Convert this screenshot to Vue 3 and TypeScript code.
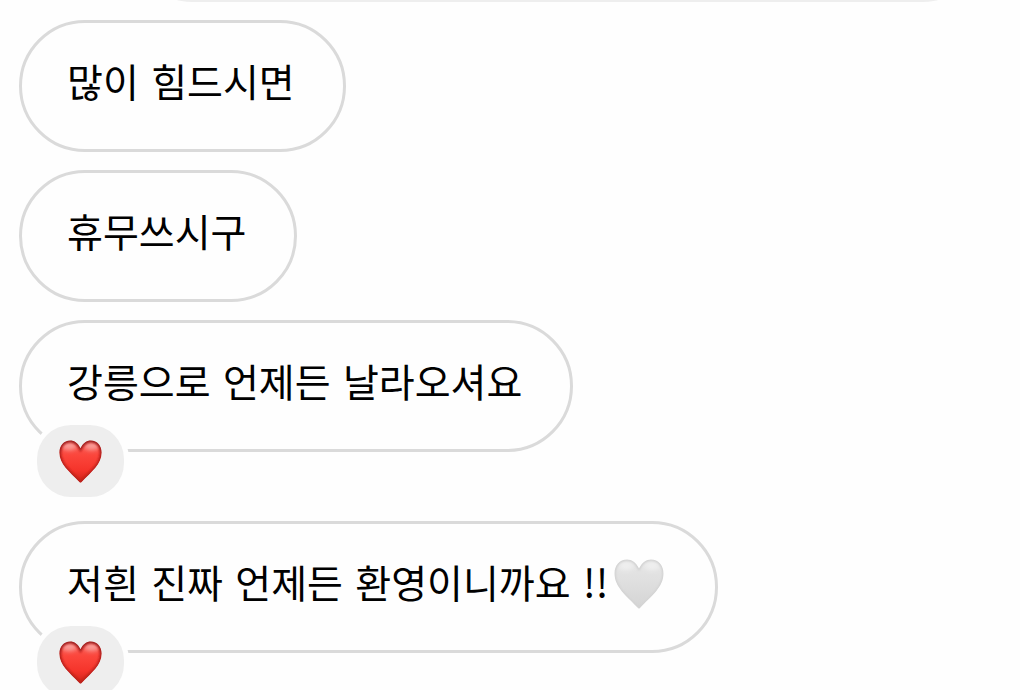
<script setup lang="ts">
interface Message {
  id: number
  text: string
  marks?: string
  whiteHeart?: boolean
  reaction?: boolean
}

const messages: Message[] = [
  { id: 1, text: '많이 힘드시면' },
  { id: 2, text: '휴무쓰시구' },
  { id: 3, text: '강릉으로 언제든 날라오셔요', reaction: true },
  { id: 4, text: '저흰 진짜 언제든 환영이니까요 ', marks: '!!', whiteHeart: true, reaction: true },
]
</script>

<template>
  <main class="chat">
    <svg class="defs" aria-hidden="true">
      <defs>
        <path
          id="heart"
          d="M25 9.500C22 3.500 18 .5 13 .5C5.500 .5 .5 6.500 .5 14.500C.5 28 12 36.500 24 49Q25 50 26 49C38 36.500 49.500 28 49.500 14.500C49.500 6.500 44.500 .5 37 .5C32 .5 28 3.500 25 9.500Z"
        />
        <clipPath id="heart-clip"><use href="#heart" /></clipPath>
        <filter id="soften" x="-20%" y="-20%" width="140%" height="140%">
          <feGaussianBlur stdDeviation="1" />
        </filter>
        <filter id="diffuse" x="-60%" y="-100%" width="220%" height="300%">
          <feGaussianBlur stdDeviation="2.4" />
        </filter>
        <linearGradient id="red-fill" x1="0" y1="0" x2="0" y2="1">
          <stop offset="0" stop-color="#f5605a" />
          <stop offset="0.35" stop-color="#fb463c" />
          <stop offset="0.7" stop-color="#f5342b" />
          <stop offset="1" stop-color="#cc2219" />
        </linearGradient>
        <linearGradient id="red-edge" x1="0" y1="0" x2="0" y2="1">
          <stop offset="0" stop-color="#951313" />
          <stop offset="0.5" stop-color="#b9201a" />
          <stop offset="1" stop-color="#b9201a" />
        </linearGradient>
        <linearGradient id="white-fill" x1="0" y1="0" x2="0" y2="1">
          <stop offset="0" stop-color="#e6e6e6" />
          <stop offset="0.4" stop-color="#e0e0e0" />
          <stop offset="1" stop-color="#d4d4d4" />
        </linearGradient>
        <linearGradient id="white-edge" x1="0" y1="0" x2="0" y2="1">
          <stop offset="0" stop-color="#c8c8c8" />
          <stop offset="1" stop-color="#d4d4d4" />
        </linearGradient>
      </defs>
    </svg>

    <div class="previous" aria-hidden="true"></div>

    <ul class="messages">
      <li v-for="message in messages" :key="message.id" class="message">
        <p class="bubble">
          {{ message.text }}<span v-if="message.marks" class="marks">{{ message.marks }}</span
          ><svg v-if="message.whiteHeart" class="white-heart" viewBox="0 0 50 50" role="img" aria-label="하얀 하트">
            <g clip-path="url(#heart-clip)">
              <use href="#heart" fill="url(#white-fill)" />
              <g fill="#fff" fill-opacity="0.45" filter="url(#diffuse)">
                <ellipse cx="12" cy="7" rx="8" ry="4" />
                <ellipse cx="38" cy="7" rx="8" ry="4" />
              </g>
              <use href="#heart" fill="none" stroke="url(#white-edge)" stroke-width="2" filter="url(#soften)" />
            </g>
          </svg>
        </p>
        <button v-if="message.reaction" class="reaction" type="button" aria-label="하트 공감">
          <svg class="red-heart" viewBox="0 0 50 50" aria-hidden="true">
            <g clip-path="url(#heart-clip)">
              <use href="#heart" fill="url(#red-fill)" />
              <g fill="#fff" fill-opacity="0.4" filter="url(#diffuse)">
                <ellipse cx="12" cy="7" rx="9" ry="5" />
                <ellipse cx="38" cy="7" rx="9" ry="5" />
              </g>
              <use href="#heart" fill="none" stroke="url(#red-edge)" stroke-width="4" filter="url(#soften)" />
            </g>
          </svg>
        </button>
      </li>
    </ul>
  </main>
</template>

<style>
body {
  margin: 0;
  background: #fefefe;
}
</style>

<style scoped>
.chat {
  display: flex;
  flex-direction: column;
  gap: 18px;
  height: 100vh;
  overflow: hidden;
  box-sizing: border-box;
  padding: 0 19px;
  background: #fefefe;
}

.defs {
  position: absolute;
  width: 0;
  height: 0;
}

.previous {
  flex: none;
  height: 132px;
  margin: -130px 13px 0 108px;
  border-radius: 66px;
  background: #eee;
}

.messages {
  display: flex;
  flex-direction: column;
  gap: 18px;
  margin: 0;
  padding: 0;
  list-style: none;
}

.message {
  display: flex;
  flex-direction: column;
  align-items: flex-start;
}

.message:has(.reaction) {
  margin-bottom: 6px;
}

.bubble {
  box-sizing: border-box;
  margin: 0;
  padding: 0 48px 4px 45px;
  border: 3px solid #dadada;
  border-radius: 66px;
  background: #fefefe;
  color: #000;
  font-family: "DejaVu Sans", "Noto Sans CJK KR", sans-serif;
  font-size: 39px;
  line-height: 122px;
}

.marks {
  font-family: "Noto Sans CJK KR", sans-serif;
  line-height: 1;
}

.white-heart {
  width: 50px;
  height: 50px;
  margin: 0 3px 0 6px;
  vertical-align: -11px;
}

.reaction {
  display: flex;
  align-items: center;
  justify-content: center;
  width: 87px;
  height: 72px;
  margin: -27px 0 0 18px;
  padding: 0;
  border: 0;
  border-radius: 34px;
  background: #eee;
  box-shadow: 0 0 0 5px #fefefe;
}

.red-heart {
  width: 43px;
  height: 43px;
}
</style>
